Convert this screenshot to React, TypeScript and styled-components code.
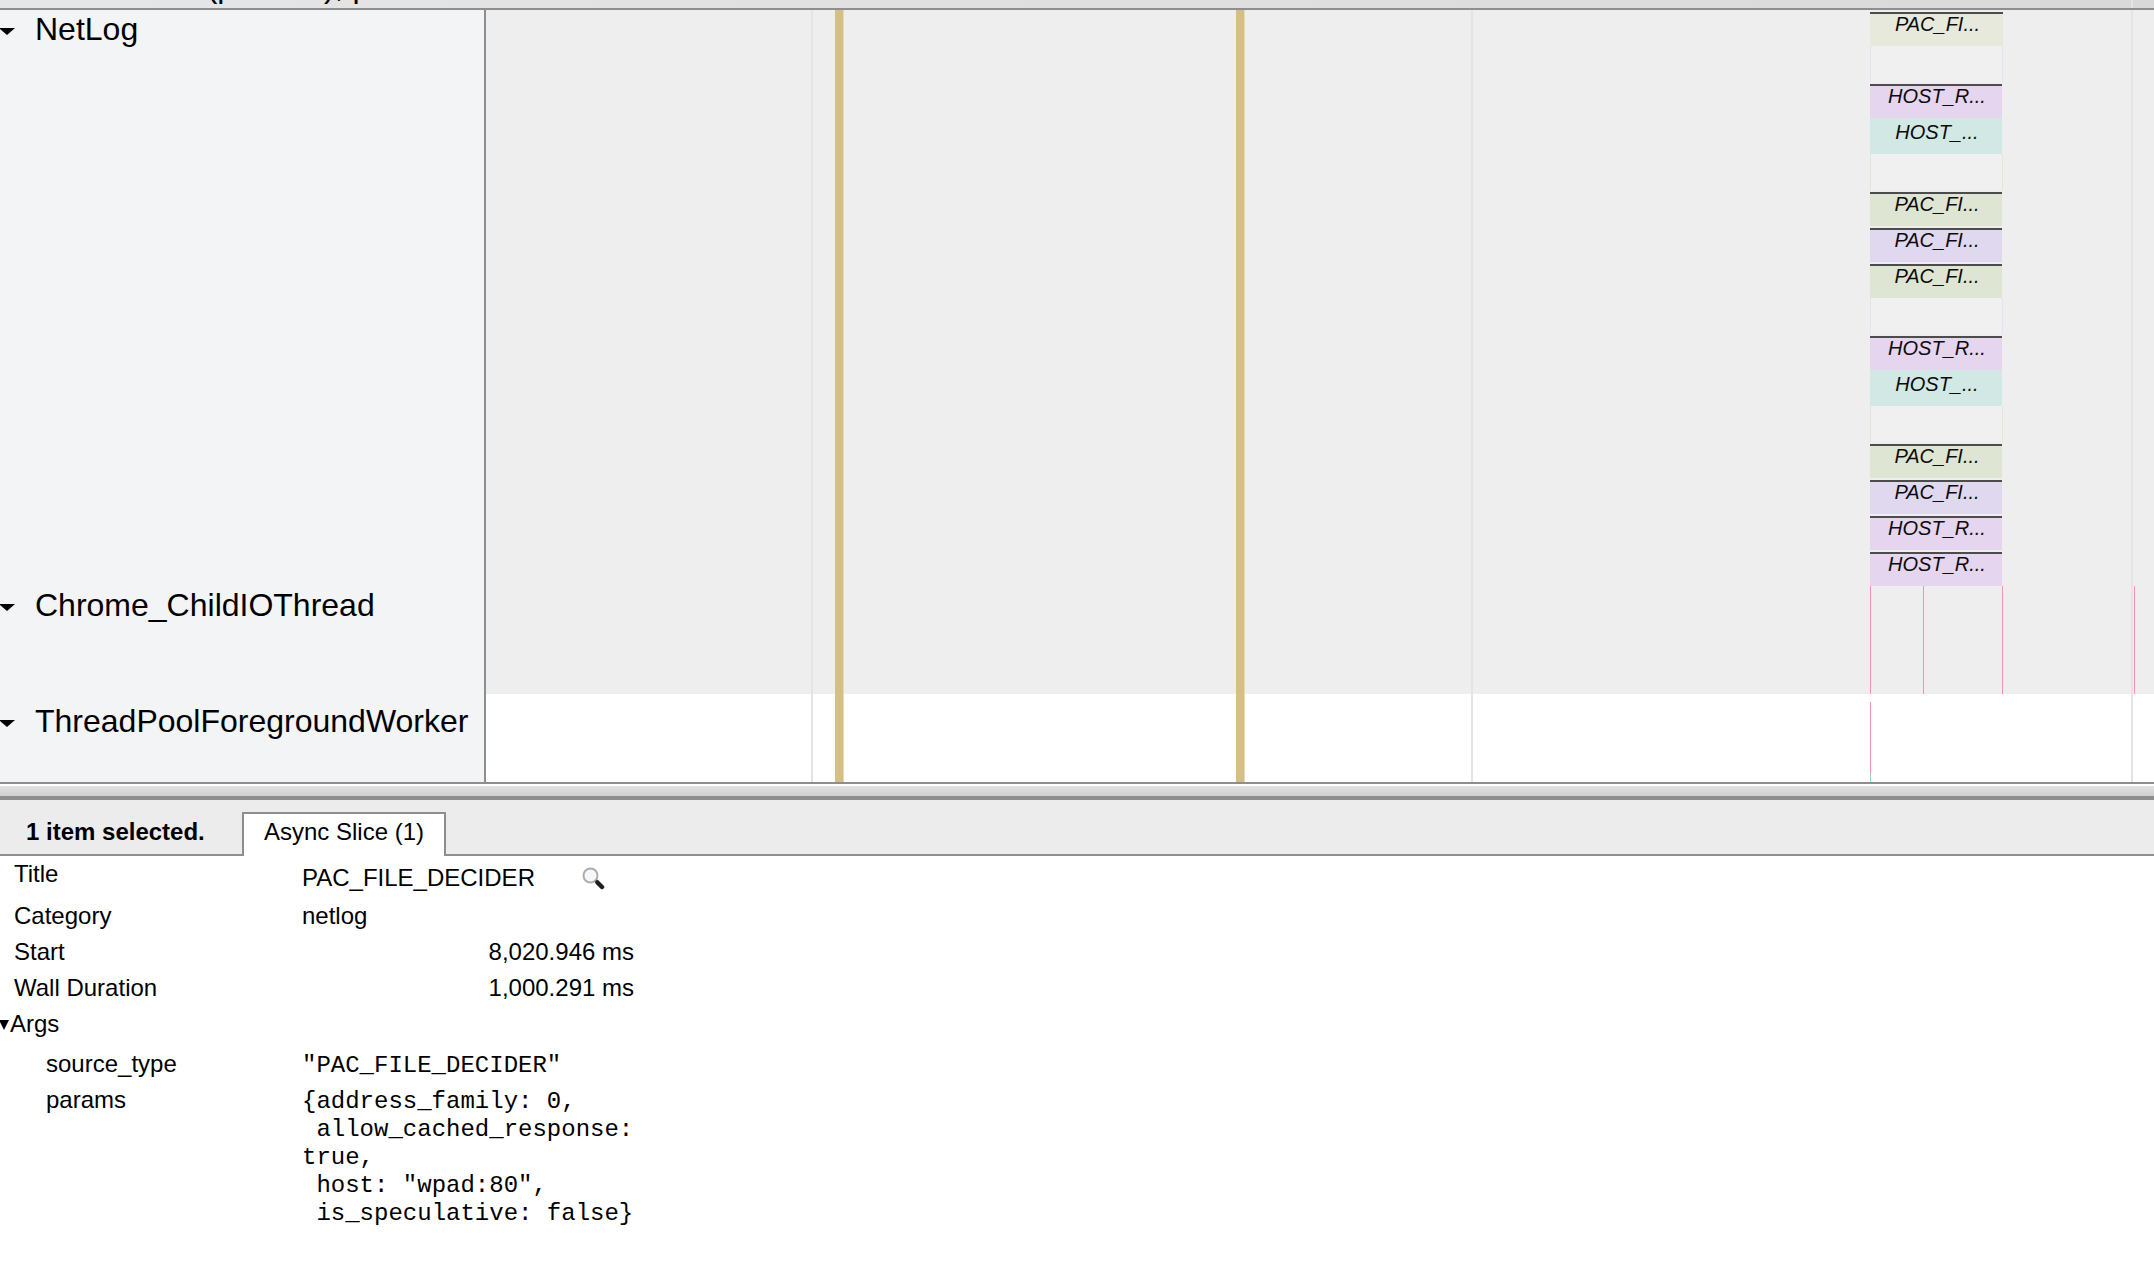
import React from 'react';
import styled, { createGlobalStyle } from 'styled-components';

const GlobalStyle = createGlobalStyle`
  html, body {
    margin: 0;
    padding: 0;
    background: #fff;
  }
  body {
    font-family: "Liberation Sans", Arial, sans-serif;
    color: #000;
  }
`;

const Page = styled.div`
  width: 2154px;
  height: 1276px;
  display: flex;
  flex-direction: column;
  overflow: hidden;
`;

const TopStrip = styled.div`
  position: relative;
  flex: none;
  height: 8px;
  padding-left: 27px;
  overflow: hidden;
  background: linear-gradient(to right, #e6e6e6, #d9d9d9);
  border-bottom: 2px solid #8e8e8e;
`;

const StripText = styled.div`
  margin-top: -30px;
  font-size: 32px;
  line-height: 32px;
  white-space: nowrap;
`;

const Viewport = styled.div`
  flex: none;
  height: 772px;
  display: flex;
`;

const Sidebar = styled.div`
  flex: none;
  width: 484px;
  background: #f3f4f6;
  border-right: 2px solid #8e8e8e;
`;

const TrackLabel = styled.div<{ $height: number }>`
  height: ${p => p.$height}px;
  display: flex;
  align-items: flex-start;
  gap: 20px;
  font-size: 32px;
  line-height: 38px;
  white-space: nowrap;
`;

const Caret = styled.span`
  flex: none;
  width: 0;
  height: 0;
  margin-top: 18px;
  border-left: 8px solid transparent;
  border-right: 8px solid transparent;
  border-top: 7px solid #000;
  margin-left: -1px;
`;

const Timeline = styled.div`
  position: relative;
  flex: 1;
  display: flex;
  flex-direction: column;
`;

const GridLine = styled.div<{ $left: number }>`
  position: absolute;
  top: 0;
  bottom: 0;
  left: ${p => p.$left}px;
  width: 2px;
  background: #e4e4e4;
`;

const FlagLine = styled.div<{ $left: number }>`
  position: absolute;
  top: 0;
  bottom: 0;
  left: ${p => p.$left}px;
  width: 8px;
  background: #d4bf85;
  border-right: 1px solid #e6dab4;
`;

const NetLogLane = styled.div`
  box-sizing: border-box;
  height: 576px;
  padding: 2px 0 0 1384px;
  background: #eee;
`;

const Slice = styled.div<{ $color: string; $wide?: boolean }>`
  box-sizing: border-box;
  width: ${p => (p.$wide ? 133 : 132)}px;
  height: 34px;
  margin-bottom: 2px;
  padding-left: 2px;
  border-top: 2px solid #4c4c4c;
  background: ${p => p.$color};
  font-size: 20px;
  font-style: italic;
  line-height: 20px;
  text-align: center;
  color: #0c0c0c;
  white-space: nowrap;
`;

const FlushSlice = styled(Slice)`
  height: 36px;
  margin-top: -2px;
  border-top: 0;
  padding-top: 4px;
`;

const EmptySlice = styled.div<{ $edge: string }>`
  box-sizing: border-box;
  width: 133px;
  height: 36px;
  margin-top: -2px;
  margin-bottom: 2px;
  background: #f0f0f0;
  border-left: 1px solid ${p => p.$edge};
  border-right: 1px solid ${p => p.$edge};
`;

const EventLane = styled.div<{ $height: number; $bg: string }>`
  position: relative;
  height: ${p => p.$height}px;
  background: ${p => p.$bg};
`;

const Tick = styled.div<{ $left: number; $top: number; $height: number; $color: string }>`
  position: absolute;
  left: ${p => p.$left}px;
  top: ${p => p.$top}px;
  width: 1px;
  height: ${p => p.$height}px;
  background: ${p => p.$color};
  z-index: 2;
`;

const Splitter = styled.div`
  flex: none;
  box-sizing: border-box;
  height: 18px;
  border-top: 2px solid #8e8e8e;
  border-bottom: 4px solid #8e8e8e;
  background: linear-gradient(to bottom, #fff 0, #fff 2px, #e2e2e2 2px, #cfcfcf 100%);
`;

const TabBar = styled.div`
  flex: none;
  box-sizing: border-box;
  height: 56px;
  display: flex;
  align-items: flex-end;
  background: #ececec;
  border-bottom: 2px solid #8e8e8e;
`;

const SelectionCount = styled.div`
  width: 242px;
  box-sizing: border-box;
  padding-left: 26px;
  height: 44px;
  font-size: 24px;
  font-weight: bold;
  line-height: 43px;
  white-space: nowrap;
`;

const Tab = styled.div`
  box-sizing: border-box;
  width: 204px;
  height: 44px;
  margin-bottom: -2px;
  background: #fff;
  border: 2px solid #8e8e8e;
  border-bottom: 0;
  font-size: 24px;
  line-height: 36px;
  text-align: center;
  white-space: nowrap;
`;

const Details = styled.div`
  flex: 1;
  background: #fff;
  font-size: 24px;
`;

const Row = styled.div<{ $height?: number; $indent?: number }>`
  display: grid;
  grid-template-columns: ${p => 302 - (p.$indent ?? 14)}px 332px;
  height: ${p => p.$height ?? 36}px;
  padding-left: ${p => p.$indent ?? 14}px;
  line-height: ${p => p.$height ?? 36}px;
  white-space: nowrap;
`;

const TitleRow = styled(Row)`
  line-height: 28px;
`;

const TitleLabel = styled.div`
  padding-top: 4px;
`;

const TitleValue = styled.div`
  padding-top: 8px;
  display: flex;
  align-items: center;
  align-self: start;
  gap: 46px;
`;

const Numeric = styled.div`
  text-align: right;
`;

const ArgsHeader = styled.div`
  height: 36px;
  margin-bottom: 4px;
  display: flex;
  align-items: center;
  gap: 1px;
  line-height: 36px;
`;

const ArgsCaret = styled.span`
  width: 0;
  height: 0;
  margin-top: 2px;
  margin-left: -1px;
  border-left: 5px solid transparent;
  border-right: 5px solid transparent;
  border-top: 10px solid #000;
`;

const Mono = styled.div`
  padding-top: 2px;
  font-family: "Liberation Mono", "Courier New", monospace;
`;

const MonoBlock = styled(Mono)`
  line-height: 28px;
  padding-top: 2px;
  white-space: pre-wrap;
  width: 334px;
`;

const SourceRow = styled(Row)`
  margin-bottom: 4px;
`;

const ParamsLabel = styled.div`
  line-height: 28px;
`;

const SearchIcon = () => (
  <svg width="24" height="24" viewBox="0 0 24 24">
    <circle cx="9.5" cy="9.5" r="7" fill="#f6f7f8" stroke="#a9aeb3" strokeWidth="2" />
    <path d="M14.5 14.5L16 16" stroke="#777" strokeWidth="2.5" />
    <path d="M16.5 16.5L21 21" stroke="#1d1f22" strokeWidth="4.5" strokeLinecap="round" />
  </svg>
);

type SliceRow =
  | { kind: 'slice'; text: string; color: string; wide?: boolean }
  | { kind: 'flush'; text: string; color: string }
  | { kind: 'empty'; edge: string };

const PAC_GREEN = '#dfe5d3';
const PAC_PURPLE = '#e0d8ef';
const HOST_PURPLE = '#e6d5ef';
const HOST_TEAL = '#d2e8e4';
const EDGE_PURPLE = '#e9dff2';
const EDGE_GREEN = '#e2e6d6';
const TICK_PINK = '#f78fb8';

const sliceRows: SliceRow[] = [
  { kind: 'slice', text: 'PAC_FI...', color: '#e6e9dc', wide: true },
  { kind: 'empty', edge: EDGE_PURPLE },
  { kind: 'slice', text: 'HOST_R...', color: HOST_PURPLE },
  { kind: 'flush', text: 'HOST_...', color: HOST_TEAL },
  { kind: 'empty', edge: EDGE_GREEN },
  { kind: 'slice', text: 'PAC_FI...', color: PAC_GREEN },
  { kind: 'slice', text: 'PAC_FI...', color: PAC_PURPLE },
  { kind: 'slice', text: 'PAC_FI...', color: PAC_GREEN },
  { kind: 'empty', edge: EDGE_PURPLE },
  { kind: 'slice', text: 'HOST_R...', color: HOST_PURPLE },
  { kind: 'flush', text: 'HOST_...', color: HOST_TEAL },
  { kind: 'empty', edge: EDGE_GREEN },
  { kind: 'slice', text: 'PAC_FI...', color: PAC_GREEN },
  { kind: 'slice', text: 'PAC_FI...', color: PAC_PURPLE },
  { kind: 'slice', text: 'HOST_R...', color: HOST_PURPLE },
  { kind: 'slice', text: 'HOST_R...', color: HOST_PURPLE },
];

const gridLines = [325, 985, 1645];
const flags = [349, 750];
const childIoTicks = [1384, 1437, 1516, 1648];

const paramsText = `{address_family: 0,
 allow_cached_response: true,
 host: "wpad:80",
 is_speculative: false}`;

export default function App() {
  return (
    <Page>
      <GlobalStyle />
      <TopStrip>
        <StripText>Socket Pool (params), params</StripText>
        <GridLine $left={2131} />
      </TopStrip>
      <Viewport>
        <Sidebar>
          <TrackLabel $height={576}>
            <Caret />
            NetLog
          </TrackLabel>
          <TrackLabel $height={116}>
            <Caret />
            Chrome_ChildIOThread
          </TrackLabel>
          <TrackLabel $height={80}>
            <Caret />
            ThreadPoolForegroundWorker
          </TrackLabel>
        </Sidebar>
        <Timeline>
          <NetLogLane>
            {sliceRows.map((row, i) => {
              if (row.kind === 'empty') return <EmptySlice key={i} $edge={row.edge} />;
              if (row.kind === 'flush')
                return (
                  <FlushSlice key={i} $color={row.color}>
                    {row.text}
                  </FlushSlice>
                );
              return (
                <Slice key={i} $color={row.color} $wide={row.wide}>
                  {row.text}
                </Slice>
              );
            })}
          </NetLogLane>
          <EventLane $height={108} $bg="#eee">
            {childIoTicks.map(left => (
              <Tick key={left} $left={left} $top={0} $height={108} $color={TICK_PINK} />
            ))}
          </EventLane>
          <EventLane $height={88} $bg="#fff">
            <Tick $left={1384} $top={8} $height={72} $color={TICK_PINK} />
            <Tick $left={1384} $top={80} $height={8} $color="#8fdcc8" />
          </EventLane>
          {gridLines.map(left => (
            <GridLine key={left} $left={left} />
          ))}
          {flags.map(left => (
            <FlagLine key={left} $left={left} />
          ))}
        </Timeline>
      </Viewport>
      <Splitter />
      <TabBar>
        <SelectionCount>1 item selected.</SelectionCount>
        <Tab>Async Slice (1)</Tab>
      </TabBar>
      <Details>
        <TitleRow $height={42}>
          <TitleLabel>Title</TitleLabel>
          <TitleValue>
            PAC_FILE_DECIDER
            <SearchIcon />
          </TitleValue>
        </TitleRow>
        <Row>
          <div>Category</div>
          <div>netlog</div>
        </Row>
        <Row>
          <div>Start</div>
          <Numeric>8,020.946 ms</Numeric>
        </Row>
        <Row>
          <div>Wall Duration</div>
          <Numeric>1,000.291 ms</Numeric>
        </Row>
        <ArgsHeader>
          <ArgsCaret />
          Args
        </ArgsHeader>
        <SourceRow $indent={46}>
          <div>source_type</div>
          <Mono>"PAC_FILE_DECIDER"</Mono>
        </SourceRow>
        <Row $indent={46} $height={140}>
          <ParamsLabel>params</ParamsLabel>
          <MonoBlock>{paramsText}</MonoBlock>
        </Row>
      </Details>
    </Page>
  );
}
